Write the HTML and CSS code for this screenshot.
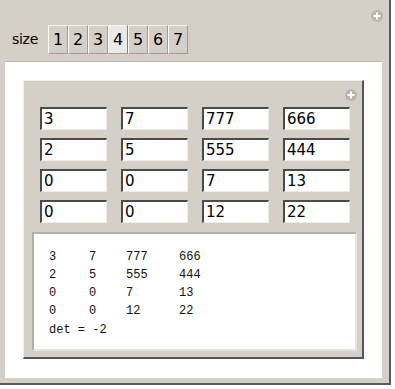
FILE: index.html
```html
<!DOCTYPE html>
<html lang="en">
<head>
  <meta charset="UTF-8" />
  <title>Determinant</title>
  <link rel="stylesheet" href="styles.css">
</head>
<body>
  <div class="frame">
    <span class="add add-frame">
      <svg width="12" height="12" viewBox="0 0 12 12"><circle cx="6" cy="6" r="6" fill="#b9b6b0"/><path d="M6 2.5v7M2.5 6h7" stroke="#fff" stroke-width="2"/></svg>
    </span>
    <div class="toolbar">
      <span class="label">size</span>
      <div class="tabs">
        <button class="tab">1</button>
        <button class="tab">2</button>
        <button class="tab">3</button>
        <button class="tab selected">4</button>
        <button class="tab">5</button>
        <button class="tab">6</button>
        <button class="tab">7</button>
      </div>
    </div>
    <div class="pane">
      <div class="panel">
        <span class="add add-panel">
          <svg width="12" height="12" viewBox="0 0 12 12"><circle cx="6" cy="6" r="6" fill="#b9b6b0"/><path d="M6 2.5v7M2.5 6h7" stroke="#fff" stroke-width="2"/></svg>
        </span>
        <div class="matriz">
          <input type="text" value="3"><input type="text" value="7"><input type="text" value="777"><input type="text" value="666">
          <input type="text" value="2"><input type="text" value="5"><input type="text" value="555"><input type="text" value="444">
          <input type="text" value="0"><input type="text" value="0"><input type="text" value="7"><input type="text" value="13">
          <input type="text" value="0"><input type="text" value="0"><input type="text" value="12"><input type="text" value="22">
        </div>
        <div class="saida">
          <table class="tabela">
            <tr><td>3</td><td>7</td><td>777</td><td>666</td></tr>
            <tr><td>2</td><td>5</td><td>555</td><td>444</td></tr>
            <tr><td>0</td><td>0</td><td>7</td><td>13</td></tr>
            <tr><td>0</td><td>0</td><td>12</td><td>22</td></tr>
          </table>
          <div class="det">det = -2</div>
        </div>
      </div>
    </div>
  </div>
</body>
</html>
```

FILE: styles.css
```css
* { box-sizing: border-box; }
body {
  margin: 0;
  background-color: #fff;
  font-family: "DejaVu Sans", sans-serif;
}
.frame {
  position: relative;
  width: 391px;
  height: 385px;
  background-color: #d4d0c8;
  border-right: 2px solid #5a5a5a;
  border-bottom: 2px solid #5a5a5a;
  padding: 25px 0 0 5px;
}
.add {
  position: absolute;
  width: 12px;
  height: 12px;
  line-height: 0;
}
.add-frame {
  top: 10px;
  left: 371px;
}
.add-panel {
  top: 8px;
  left: 321px;
}
.toolbar {
  display: flex;
  align-items: center;
  height: 29px;
  margin-bottom: 7px;
}
.label {
  font-size: 14px;
  letter-spacing: -0.3px;
  color: #000;
  margin-left: 7px;
  width: 36px;
  padding-bottom: 2px;
}
.tabs {
  display: flex;
  height: 29px;
}
.tab {
  width: 20px;
  height: 29px;
  padding: 0;
  margin: 0;
  font-family: "DejaVu Sans", sans-serif;
  font-size: 16px;
  color: #000;
  background-color: #d4d0c8;
  border-top: 1px solid #f4f3f0;
  border-left: 1px solid #fff;
  border-right: 1px solid #a09c94;
  border-bottom: 1px solid #a09c94;
}
.tab.selected {
  background-color: #ebe9e5;
  border-right-color: #808080;
}
.pane {
  width: 377px;
  height: 317px;
  background-color: #fff;
  border-top: 1px solid #bdbab3;
  padding: 18px 0 0 18px;
}
.panel {
  position: relative;
  width: 341px;
  height: 279px;
  background-color: #d4d0c8;
  border-top: 1px solid #f0efec;
  border-left: 1px solid #f0efec;
  border-right: 2px solid #555;
  border-bottom: 2px solid #555;
  padding: 26px 5px 0 8px;
}
.matriz {
  display: grid;
  grid-template-columns: repeat(4, 67px);
  grid-auto-rows: 23px;
  column-gap: 14px;
  row-gap: 8px;
  margin-left: 8px;
}
.matriz input {
  width: 67px;
  height: 23px;
  margin: 0;
  padding: 0 0 0 2px;
  font-family: "DejaVu Sans", sans-serif;
  font-size: 15px;
  color: #000;
  background-color: #fff;
  border-top: 2px solid #4a4a4a;
  border-left: 2px solid #4a4a4a;
  border-right: 1px solid #eeede9;
  border-bottom: 1px solid #eeede9;
  outline: none;
}
.saida {
  width: 325px;
  height: 119px;
  margin-top: 9px;
  background-color: #fff;
  border-top: 2px solid #b4b0a8;
  border-left: 2px solid #b4b0a8;
  border-right: 2px solid #e6e4e0;
  border-bottom: 2px solid #e6e4e0;
  padding: 14px 0 0 15px;
  font-family: "Liberation Mono", monospace;
  font-size: 12px;
  line-height: 18px;
  color: #111;
}
.tabela {
  border-collapse: collapse;
}
.tabela td {
  padding: 0;
  width: 40px;
}
.tabela td:nth-child(2) { width: 37px; }
.tabela td:nth-child(3) { width: 53px; }
.det {
  margin-top: 1px;
}
```
